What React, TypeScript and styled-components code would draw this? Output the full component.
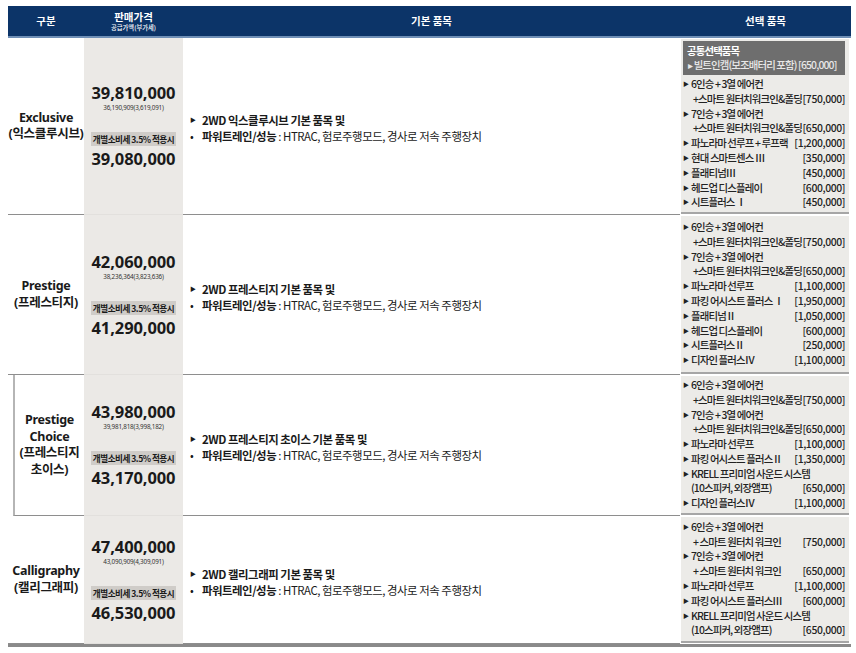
import React from 'react';
import styled, { createGlobalStyle } from 'styled-components';

const Global = createGlobalStyle`
  html, body { margin: 0; padding: 0; background: #ffffff; }
  body { font-family: "Noto Sans", "Noto Sans CJK KR", sans-serif; color: #1a1a1a; }
`;

const Page = styled.div`
  padding: 6px 5px 0 8px;
  width: 843px;
`;

const Grid = styled.div`
  display: grid;
  grid-template-columns: 76px 99px 497px 171px;
`;

const HeadCell = styled.div`
  height: 30px;
  background: #0c3468;
  border-bottom: 2px solid #6f8fb6;
  color: #ffffff;
  font-family: "Noto Sans CJK KR", sans-serif;
  font-weight: 700;
  font-size: 10.5px;
  display: flex;
  flex-direction: column;
  align-items: center;
  justify-content: center;
  line-height: 12px;
`;

const HeadSmall = styled.span`
  font-size: 6.3px;
  line-height: 7px;
  margin-top: 1px;
  font-weight: 500;
`;

const NameCell = styled.div<{ $h: number; $boxed?: boolean }>`
  height: ${p => p.$h}px;
  box-sizing: border-box;
  border-bottom: 1px solid #8e8e8e;
  display: flex;
  align-items: center;
  justify-content: center;
  ${p => p.$boxed ? 'border-left: 2px solid #b5b5b5; margin-left: 5px;' : ''}
`;

const NameText = styled.div`
  font-family: "Noto Sans", "Noto Sans CJK KR", sans-serif;
  font-weight: 700;
  font-size: 12.5px;
  line-height: 16.5px;
  text-align: center;
  letter-spacing: -0.3px;
`;

const PriceCell = styled.div<{ $h: number }>`
  height: ${p => p.$h}px;
  box-sizing: border-box;
  background: #ebe9e6;
  border-bottom: 1px solid #e2e0dd;
  display: flex;
  flex-direction: column;
  align-items: center;
  justify-content: center;
`;

const BigPrice = styled.div`
  font-family: "Noto Sans", sans-serif;
  font-weight: 700;
  font-size: 16.5px;
  line-height: 18px;
  letter-spacing: -0.1px;
`;

const SubPrice = styled.div`
  font-size: 6.3px;
  line-height: 8px;
  color: #333;
  margin-top: 2px;
  letter-spacing: -0.2px;
`;

const TaxBadge = styled.div`
  margin-top: 20px;
  margin-bottom: 4px;
  background: #cfccc8;
  font-family: "Noto Sans CJK KR", sans-serif;
  font-weight: 700;
  font-size: 8.6px;
  letter-spacing: -0.5px;
  padding: 1px 2px;
  line-height: 12px;
  white-space: nowrap;
`;

const BasicCell = styled.div<{ $h: number }>`
  height: ${p => p.$h}px;
  box-sizing: border-box;
  border-bottom: 1px solid #8e8e8e;
  display: flex;
  flex-direction: column;
  justify-content: center;
  padding-left: 7px;
  padding-top: 4px;
  font-family: "Noto Sans CJK KR", sans-serif;
  font-size: 11.4px;
  line-height: 16px;
  letter-spacing: -0.45px;
`;

const BasicLine = styled.div`
  display: flex;
  align-items: center;
`;

const Bullet = styled.span<{ $size: number }>`
  width: 12px;
  font-size: ${p => p.$size}px;
  flex: none;
`;

const Bold = styled.b`
  font-weight: 700;
`;

const OptCol = styled.div<{ $h: number }>`
  height: ${p => p.$h}px;
  box-sizing: border-box;
  padding: 1px 2px 0 1px;
  display: flex;
`;

const OptBox = styled.div<{ $pad: number }>`
  flex: 1;
  background: #ecebe8;
  border-bottom: 2px solid #a6a6a6;
  margin-bottom: 1px;
  padding: ${p => p.$pad}px 4px 0 2px;
  display: flex;
  flex-direction: column;
  justify-content: ${p => p.$pad ? 'flex-start' : 'center'};
  font-family: "Noto Sans CJK KR", sans-serif;
  font-weight: 500;
  font-size: 10.4px;
  letter-spacing: -0.85px;
  color: #222;
`;

const CommonBox = styled.div`
  background: #6e6e6e;
  color: #fff;
  padding: 3px 4px 3px 4px;
  margin-bottom: 2px;
  line-height: 14px;
`;

const CommonTitle = styled.div`
  font-weight: 700;
`;

const CommonItem = styled.div`
  color: #e8e8e8;
  padding-left: 1px;
`;

const OptLine = styled.div<{ $indent: number }>`
  display: flex;
  justify-content: space-between;
  line-height: 14.8px;
  padding-left: ${p => p.$indent}px;
  white-space: nowrap;
`;

const OptLabel = styled.span`
  display: flex;
  align-items: center;
`;

const OptBullet = styled.span`
  font-size: 6px;
  width: 8px;
  flex: none;
`;

const OptPrice = styled.span`
  letter-spacing: -0.4px;
`;

const BottomRule = styled.div`
  height: 3px;
  background: #8a8a8a;
  width: 843px;
`;

type Opt = { label: string; price?: string; kind: 'b' | 'plus' | 'sub' };

type Row = {
  name: string[];
  h: number;
  boxed?: boolean;
  price: string;
  sub: string;
  tax: string;
  trim: string;
  common?: boolean;
  opts: Opt[];
};

const seatOpts = (a: string, b: string): Opt[] => [
  { kind: 'b', label: '6인승 + 3열 에어컨' },
  { kind: 'plus', label: '+스마트 원터치워크인&폴딩', price: a },
  { kind: 'b', label: '7인승 + 3열 에어컨' },
  { kind: 'plus', label: '+스마트 원터치워크인&폴딩', price: b },
];

const rows: Row[] = [
  {
    name: ['Exclusive', '(익스클루시브)'], h: 177,
    price: '39,810,000', sub: '36,190,909(3,619,091)', tax: '39,080,000', trim: '익스클루시브',
    common: true,
    opts: [
      ...seatOpts('[750,000]', '[650,000]'),
      { kind: 'b', label: '파노라마 선루프 + 루프랙', price: '[1,200,000]' },
      { kind: 'b', label: '현대 스마트센스 Ⅲ', price: '[350,000]' },
      { kind: 'b', label: '플래티넘Ⅲ', price: '[450,000]' },
      { kind: 'b', label: '헤드업 디스플레이', price: '[600,000]' },
      { kind: 'b', label: '시트플러스 Ⅰ', price: '[450,000]' },
    ],
  },
  {
    name: ['Prestige', '(프레스티지)'], h: 160,
    price: '42,060,000', sub: '38,236,364(3,823,636)', tax: '41,290,000', trim: '프레스티지',
    opts: [
      ...seatOpts('[750,000]', '[650,000]'),
      { kind: 'b', label: '파노라마 선루프', price: '[1,100,000]' },
      { kind: 'b', label: '파킹 어시스트 플러스 Ⅰ', price: '[1,950,000]' },
      { kind: 'b', label: '플래티넘Ⅱ', price: '[1,050,000]' },
      { kind: 'b', label: '헤드업 디스플레이', price: '[600,000]' },
      { kind: 'b', label: '시트플러스Ⅱ', price: '[250,000]' },
      { kind: 'b', label: '디자인 플러스Ⅳ', price: '[1,100,000]' },
    ],
  },
  {
    name: ['Prestige', 'Choice', '(프레스티지', '초이스)'], h: 141, boxed: true,
    price: '43,980,000', sub: '39,981,818(3,998,182)', tax: '43,170,000', trim: '프레스티지 초이스',
    opts: [
      ...seatOpts('[750,000]', '[650,000]'),
      { kind: 'b', label: '파노라마 선루프', price: '[1,100,000]' },
      { kind: 'b', label: '파킹 어시스트 플러스Ⅱ', price: '[1,350,000]' },
      { kind: 'b', label: 'KRELL 프리미엄 사운드 시스템' },
      { kind: 'sub', label: '(10스피커, 외장앰프)', price: '[650,000]' },
      { kind: 'b', label: '디자인 플러스Ⅳ', price: '[1,100,000]' },
    ],
  },
  {
    name: ['Calligraphy', '(캘리그래피)'], h: 128,
    price: '47,400,000', sub: '43,090,909(4,309,091)', tax: '46,530,000', trim: '캘리그래피',
    opts: [
      { kind: 'b', label: '6인승 + 3열 에어컨' },
      { kind: 'plus', label: '+ 스마트 원터치 워크인', price: '[750,000]' },
      { kind: 'b', label: '7인승 + 3열 에어컨' },
      { kind: 'plus', label: '+ 스마트 원터치 워크인', price: '[650,000]' },
      { kind: 'b', label: '파노라마 선루프', price: '[1,100,000]' },
      { kind: 'b', label: '파킹 어시스트 플러스Ⅲ', price: '[600,000]' },
      { kind: 'b', label: 'KRELL 프리미엄 사운드 시스템' },
      { kind: 'sub', label: '(10스피커, 외장앰프)', price: '[650,000]' },
    ],
  },
];

export default function App() {
  return (
    <Page>
      <Global />
      <Grid>
        <HeadCell>구분</HeadCell>
        <HeadCell>
          <span>판매가격</span>
          <HeadSmall>공급가액(부가세)</HeadSmall>
        </HeadCell>
        <HeadCell>기본 품목</HeadCell>
        <HeadCell>선택 품목</HeadCell>
        {rows.map(r => (
          <React.Fragment key={r.price}>
            <NameCell $h={r.h} $boxed={r.boxed}>
              <NameText>
                {r.name.map(n => <div key={n}>{n}</div>)}
              </NameText>
            </NameCell>
            <PriceCell $h={r.h}>
              <BigPrice>{r.price}</BigPrice>
              <SubPrice>{r.sub}</SubPrice>
              <TaxBadge>개별소비세 3.5% 적용시</TaxBadge>
              <BigPrice>{r.tax}</BigPrice>
            </PriceCell>
            <BasicCell $h={r.h}>
              <BasicLine>
                <Bullet $size={6}>▶</Bullet>
                <Bold>2WD {r.trim} 기본 품목 및</Bold>
              </BasicLine>
              <BasicLine>
                <Bullet $size={11}>•</Bullet>
                <span><Bold>파워트레인/성능</Bold> : HTRAC, 험로주행모드, 경사로 저속 주행장치</span>
              </BasicLine>
            </BasicCell>
            <OptCol $h={r.h}>
              <OptBox $pad={r.common ? 2 : 0}>
                {r.common && (
                  <CommonBox>
                    <CommonTitle>공통선택품목</CommonTitle>
                    <CommonItem>▸ 빌트인캠(보조배터리 포함) [650,000]</CommonItem>
                  </CommonBox>
                )}
                {r.opts.map((o, i) => (
                  <OptLine key={i} $indent={o.kind === 'plus' ? 10 : o.kind === 'sub' ? 8 : 0}>
                    <OptLabel>
                      {o.kind === 'b' && <OptBullet>▶</OptBullet>}
                      <span>{o.label}</span>
                    </OptLabel>
                    {o.price && <OptPrice>{o.price}</OptPrice>}
                  </OptLine>
                ))}
              </OptBox>
            </OptCol>
          </React.Fragment>
        ))}
      </Grid>
      <BottomRule />
    </Page>
  );
}
